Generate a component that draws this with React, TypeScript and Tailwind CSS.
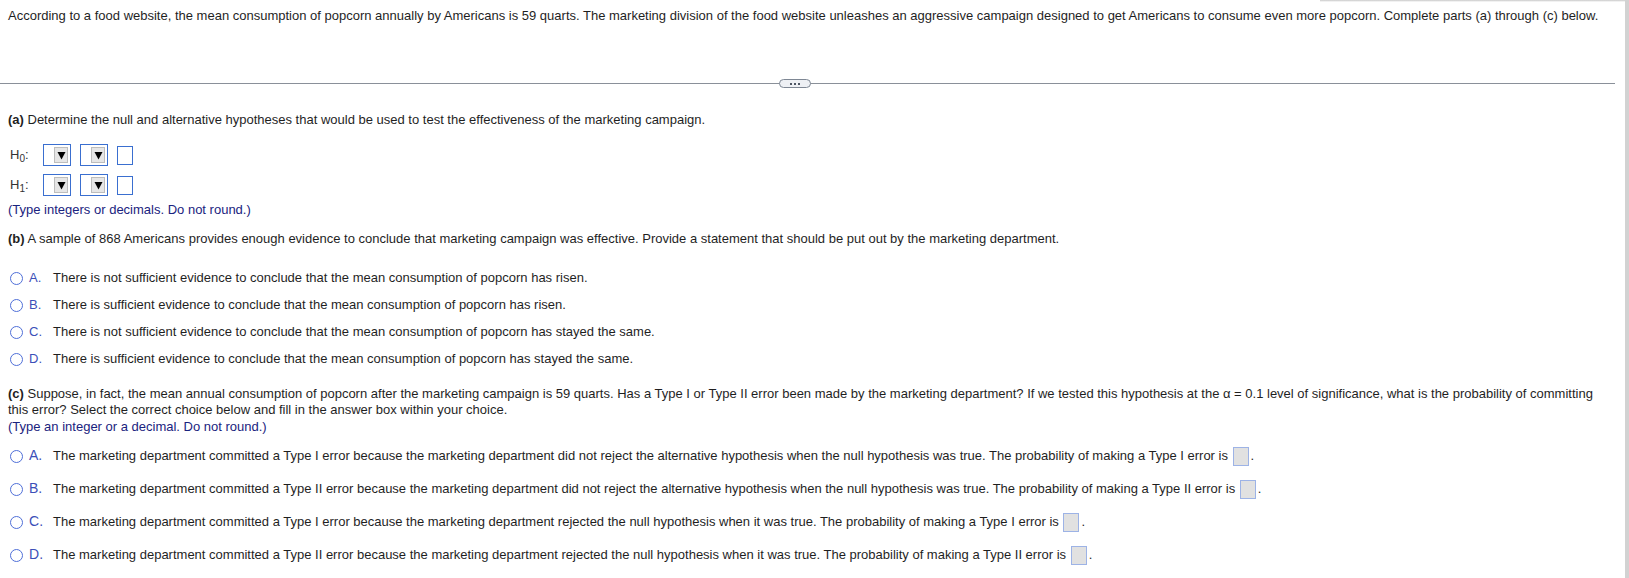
import type { ReactNode } from "react";

const font = { fontFamily: '"Liberation Sans", Arial, sans-serif' };

function Dropdown() {
	return (
		<span className="inline-flex h-[22px] w-[28px] items-stretch justify-end border border-[#3a6fd0] bg-white p-[2px]">
			<span className="flex w-[14px] items-center justify-center border border-[#bdbdbd] bg-[#e6e6e6]">
				<svg width="9" height="9" viewBox="0 0 9 9">
					<path d="M0.5 1 L8.5 1 L4.5 8.5 Z" fill="#000" />
				</svg>
			</span>
		</span>
	);
}

function TextBox() {
	return <span className="inline-block h-[19px] w-[16px] border border-[#3a6fd0] bg-white" />;
}

function AnswerBox() {
	return <span className="ml-[1px] mr-[2px] inline-block h-[19px] w-[16px] border border-[#9db3e6] bg-[#e1e1e1] align-middle" />;
}

function Radio() {
	return <span className="inline-block h-[13px] w-[13px] shrink-0 rounded-full border border-[#4f6fd8] bg-white" />;
}

function Choice({ letter, children, raised }: { letter: string; children: ReactNode; raised?: boolean }) {
	return (
		<div className={`flex items-center ${raised ? "h-[19px]" : "h-[16px]"}`}>
			<Radio />
			<span className={`ml-[6px] w-[24px] text-[#3c4fb8] ${raised ? "-mt-[4px] text-[14px]" : ""}`}>{letter}.</span>
			<span className="whitespace-nowrap">{children}</span>
		</div>
	);
}

function Hyp({ n }: { n: string }) {
	return (
		<span className="w-[24px] text-[#333]">
			H<span className="relative top-[3px] text-[10px]">{n}</span>:
		</span>
	);
}

export default function App() {
	return (
		<div className="relative h-[578px] w-[1629px] overflow-hidden bg-white text-[13px] leading-[16px] text-[#1f1f1f]" style={font}>
			<div className="absolute right-0 top-0 h-full w-[4px] bg-[#d2d2d2]" />
			<div className="absolute right-[4px] top-0 h-[2px] w-[305px] bg-gradient-to-b from-[#c8c8c8] to-white" />

			<div className="pl-[8px] pt-[8px]">
				According to a food website, the mean consumption of popcorn annually by Americans is 59 quarts. The marketing
				division of the food website unleashes an aggressive campaign designed to get Americans to consume even more
				popcorn. Complete parts (a) through (c) below.
			</div>

			<div className="relative mt-[59px] w-[1615px] border-t border-[#8a9099]">
				<span className="absolute left-[779px] top-[-5px] flex h-[9px] w-[32px] items-center justify-center gap-[2px] rounded-full border border-[#7e8794] bg-[#eef0f4]">
					<span className="h-[2px] w-[2px] bg-[#4d5563]" />
					<span className="h-[2px] w-[2px] bg-[#4d5563]" />
					<span className="h-[2px] w-[2px] bg-[#4d5563]" />
				</span>
			</div>

			<div className="pl-[8px] pt-[28px]">
				<div>
					<b>(a)</b> Determine the null and alternative hypotheses that would be used to test the effectiveness of the
					marketing campaign.
				</div>

				<div className="mt-[16px] flex items-center gap-[9px] pl-[2px]">
					<Hyp n="0" />
					<Dropdown />
					<Dropdown />
					<TextBox />
				</div>
				<div className="mt-[8px] flex items-center gap-[9px] pl-[2px]">
					<Hyp n="1" />
					<Dropdown />
					<Dropdown />
					<TextBox />
				</div>
				<div className="mt-[6px] text-[#1a237e]">(Type integers or decimals. Do not round.)</div>

				<div className="mt-[13px]">
					<b>(b)</b> A sample of 868 Americans provides enough evidence to conclude that marketing campaign was effective.
					Provide a statement that should be put out by the marketing department.
				</div>

				<div className="mt-[23px] flex flex-col gap-[11px] pl-[2px]">
					<Choice letter="A">There is not sufficient evidence to conclude that the mean consumption of popcorn has risen.</Choice>
					<Choice letter="B">There is sufficient evidence to conclude that the mean consumption of popcorn has risen.</Choice>
					<Choice letter="C">There is not sufficient evidence to conclude that the mean consumption of popcorn has stayed the same.</Choice>
					<Choice letter="D">There is sufficient evidence to conclude that the mean consumption of popcorn has stayed the same.</Choice>
				</div>

				<div className="mt-[19px] max-w-[1600px]">
					<b>(c)</b> Suppose, in fact, the mean annual consumption of popcorn after the marketing campaign is 59 quarts. Has a
					Type I or Type II error been made by the marketing department? If we tested this hypothesis at the α = 0.1 level
					of significance, what is the probability of committing this error? Select the correct choice below and fill in
					the answer box within your choice.
				</div>
				<div className="mt-[1px] text-[#1a237e]">(Type an integer or a decimal. Do not round.)</div>

				<div className="mt-[12px] flex flex-col gap-[14px] pl-[2px]">
					<Choice letter="A" raised>
						The marketing department committed a Type I error because the marketing department did not reject the
						alternative hypothesis when the null hypothesis was true. The probability of making a Type I error is{" "}
						<AnswerBox />.
					</Choice>
					<Choice letter="B" raised>
						The marketing department committed a Type II error because the marketing department did not reject the
						alternative hypothesis when the null hypothesis was true. The probability of making a Type II error is{" "}
						<AnswerBox />.
					</Choice>
					<Choice letter="C" raised>
						The marketing department committed a Type I error because the marketing department rejected the null hypothesis
						when it was true. The probability of making a Type I error is <AnswerBox />.
					</Choice>
					<Choice letter="D" raised>
						The marketing department committed a Type II error because the marketing department rejected the null
						hypothesis when it was true. The probability of making a Type II error is <AnswerBox />.
					</Choice>
				</div>
			</div>
		</div>
	);
}
